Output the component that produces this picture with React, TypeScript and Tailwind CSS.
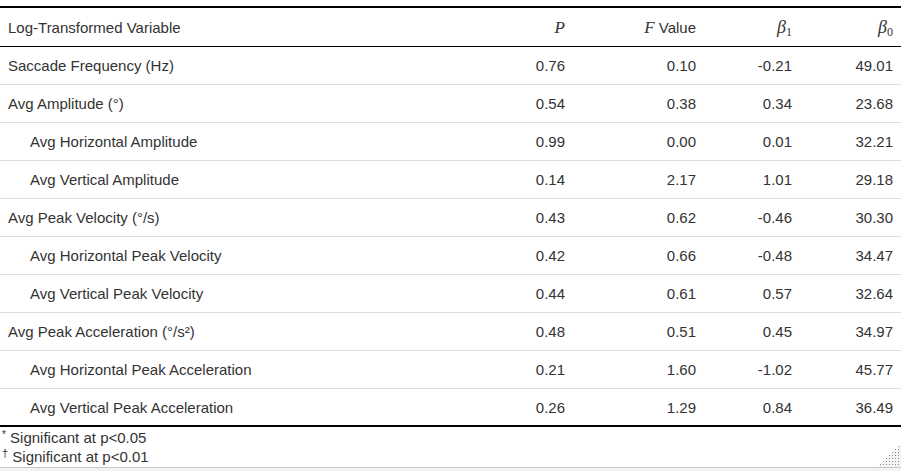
const rows = [
  { name: 'Saccade Frequency (Hz)', p: '0.76', f: '0.10', b1: '-0.21', b0: '49.01', sub: false },
  { name: 'Avg Amplitude (°)', p: '0.54', f: '0.38', b1: '0.34', b0: '23.68', sub: false },
  { name: 'Avg Horizontal Amplitude', p: '0.99', f: '0.00', b1: '0.01', b0: '32.21', sub: true },
  { name: 'Avg Vertical Amplitude', p: '0.14', f: '2.17', b1: '1.01', b0: '29.18', sub: true },
  { name: 'Avg Peak Velocity (°/s)', p: '0.43', f: '0.62', b1: '-0.46', b0: '30.30', sub: false },
  { name: 'Avg Horizontal Peak Velocity', p: '0.42', f: '0.66', b1: '-0.48', b0: '34.47', sub: true },
  { name: 'Avg Vertical Peak Velocity', p: '0.44', f: '0.61', b1: '0.57', b0: '32.64', sub: true },
  { name: 'Avg Peak Acceleration (°/s²)', p: '0.48', f: '0.51', b1: '0.45', b0: '34.97', sub: false },
  { name: 'Avg Horizontal Peak Acceleration', p: '0.21', f: '1.60', b1: '-1.02', b0: '45.77', sub: true },
  { name: 'Avg Vertical Peak Acceleration', p: '0.26', f: '1.29', b1: '0.84', b0: '36.49', sub: true },
];

const serif = "font-['Liberation_Serif',serif]";

// resize grip in the bottom-right corner
function Grip() {
  const dots = [];
  for (let r = 0; r < 7; r++) {
    for (let c = 6 - r; c < 7; c++) {
      dots.push(<rect key={`${r}-${c}`} x={2 + c * 3} y={2 + r * 3} width="1" height="1" fill="#888" />);
    }
  }
  return (
    <svg width="23" height="23" viewBox="0 0 23 23" className="absolute right-0 bottom-[4px]">
      <polygon points="23,0 23,23 0,23" fill="#f4f4f4" />
      {dots}
    </svg>
  );
}

export default function App() {
  return (
    <div className="relative w-[901px] h-[471px] overflow-hidden bg-white text-[#333] font-['Liberation_Sans',Arial,sans-serif] text-[15px]">
      <div className="pt-[6px]">
        <table className="w-full border-collapse">
          <colgroup>
            <col />
            <col className="w-[123px]" />
            <col className="w-[131px]" />
            <col className="w-[96px]" />
            <col className="w-[101px]" />
          </colgroup>
          <thead>
            <tr className="h-[39px] border-t-2 border-b border-black">
              <th className="px-2 pt-[2px] text-left font-normal">Log-Transformed Variable</th>
              <th className={`px-2 pt-[2px] text-right font-normal italic text-[17px] ${serif}`}>P</th>
              <th className="px-2 pt-[2px] text-right font-normal">
                <span className={`italic text-[17px] ${serif}`}>F</span> Value
              </th>
              <th className={`px-2 pt-[2px] text-right font-normal text-[18px] ${serif}`}>
                <span className="italic">β</span>
                <sub className="text-[12px]">1</sub>
              </th>
              <th className={`px-2 pt-[2px] text-right font-normal text-[18px] ${serif}`}>
                <span className="italic">β</span>
                <sub className="text-[12px]">0</sub>
              </th>
            </tr>
          </thead>
          <tbody>
            {rows.map((r, i) => (
              <tr
                key={r.name}
                className={`h-[38px] ${i === rows.length - 1 ? 'border-b-2 border-black' : 'border-b border-[#dddddd]'}`}
              >
                <td className={`pt-[2px] ${r.sub ? 'pl-[30px] pr-2' : 'px-2'}`}>{r.name}</td>
                <td className="px-2 pt-[2px] text-right">{r.p}</td>
                <td className="px-2 pt-[2px] text-right">{r.f}</td>
                <td className="px-2 pt-[2px] text-right">{r.b1}</td>
                <td className="px-2 pt-[2px] text-right">{r.b0}</td>
              </tr>
            ))}
          </tbody>
        </table>
        <div className="pl-[2px] pt-[1px] text-[15px] leading-[19px]">
          <div>
            <sup className="text-[10px]">*</sup> Significant at p&lt;0.05
          </div>
          <div>
            <sup className="text-[11px]">†</sup> Significant at p&lt;0.01
          </div>
        </div>
      </div>
      <div className="absolute left-0 right-0 bottom-0 h-[4px] border-t border-[#c8c8c8] bg-[#f2f2f2]" />
      <Grip />
    </div>
  );
}
